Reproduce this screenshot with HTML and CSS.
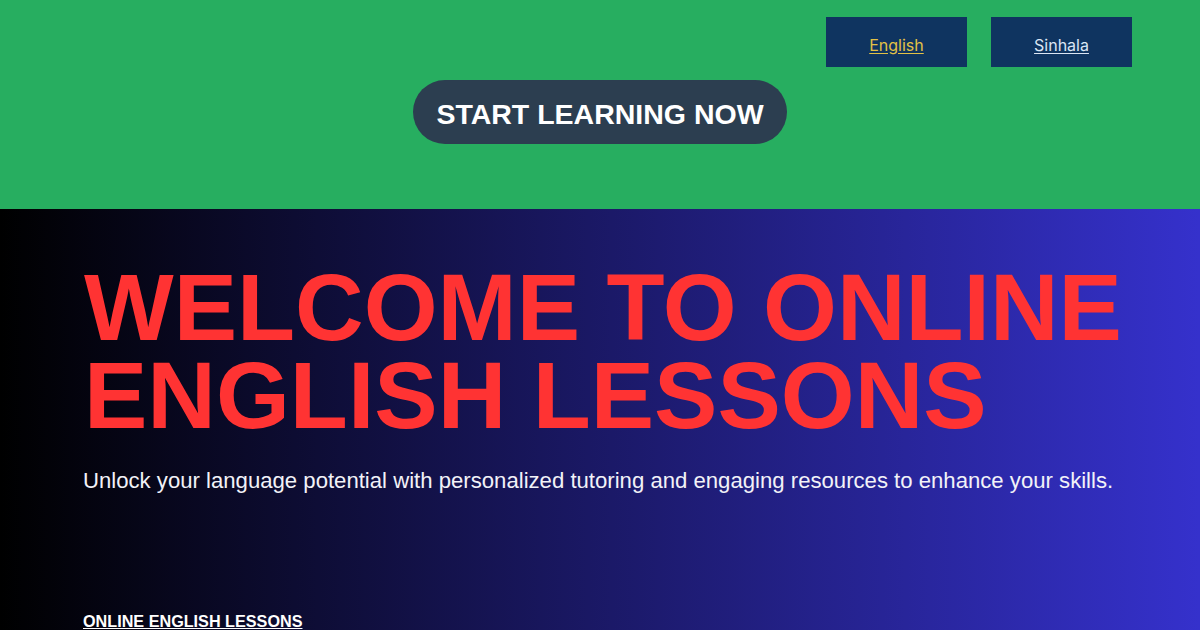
FILE: index.html
```html
<!DOCTYPE html>
<html lang="en">
<head>
<meta charset="utf-8">
<title>Online English Lessons</title>
<link rel="stylesheet" href="styles.css">
</head>
<body>
<header class="top">
  <nav class="lang">
    <a class="lang-btn lang-en" href="#">English</a>
    <a class="lang-btn lang-si" href="#">Sinhala</a>
  </nav>
  <div class="cta-row">
    <a class="cta" href="#">START LEARNING NOW</a>
  </div>
</header>
<main class="hero">
  <h1 class="title">WELCOME TO ONLINE ENGLISH LESSONS</h1>
  <p class="lead">Unlock your language potential with personalized tutoring and engaging resources to enhance your skills.</p>
  <a class="sub-link" href="#">ONLINE ENGLISH LESSONS</a>
</main>
</body>
</html>
```

FILE: styles.css
```css
html, body {
  margin: 0;
  padding: 0;
}
body {
  font-family: "Liberation Sans", Arial, sans-serif;
  background: #000;
  overflow: hidden;
  height: 630px;
}
.top {
  background: #27ae60;
  height: 209px;
  box-sizing: border-box;
  padding-top: 17px;
}
.lang {
  display: flex;
  justify-content: flex-end;
  gap: 24px;
  padding-right: 68px;
}
.lang-btn {
  width: 141px;
  height: 50px;
  box-sizing: border-box;
  padding-top: 6px;
  display: flex;
  align-items: center;
  justify-content: center;
  background: #0f3460;
  font-family: "Inter", "Liberation Sans", sans-serif;
  font-size: 16px;
  text-decoration: underline;
  text-underline-offset: 2px;
}
.lang-en { color: #e3c145; }
.lang-si { color: #dbe5f4; }
.cta-row {
  display: flex;
  justify-content: center;
  margin-top: 13px;
}
.cta {
  background: #2c3e50;
  color: #fff;
  font-weight: bold;
  font-size: 28.5px;
  line-height: 32px;
  padding: 18px 23px 14px;
  border-radius: 32px;
  text-decoration: none;
}
.hero {
  height: 421px;
  box-sizing: border-box;
  background: linear-gradient(90deg, #000000 0%, #3531cc 100%);
  padding: 54px 60px 0 83px;
  color: #fff;
}
.title {
  margin: 0 0 0 1px;
  color: #ff3333;
  font-size: 95px;
  line-height: 88px;
  font-weight: bold;
}
.lead {
  margin: 29px 0 0;
  font-size: 22.15px;
  line-height: 25px;
  color: #f2f2f8;
}
.sub-link {
  display: inline-block;
  margin-top: 119px;
  color: #fff;
  font-weight: bold;
  font-size: 16.2px;
  text-decoration: underline;
}
```
